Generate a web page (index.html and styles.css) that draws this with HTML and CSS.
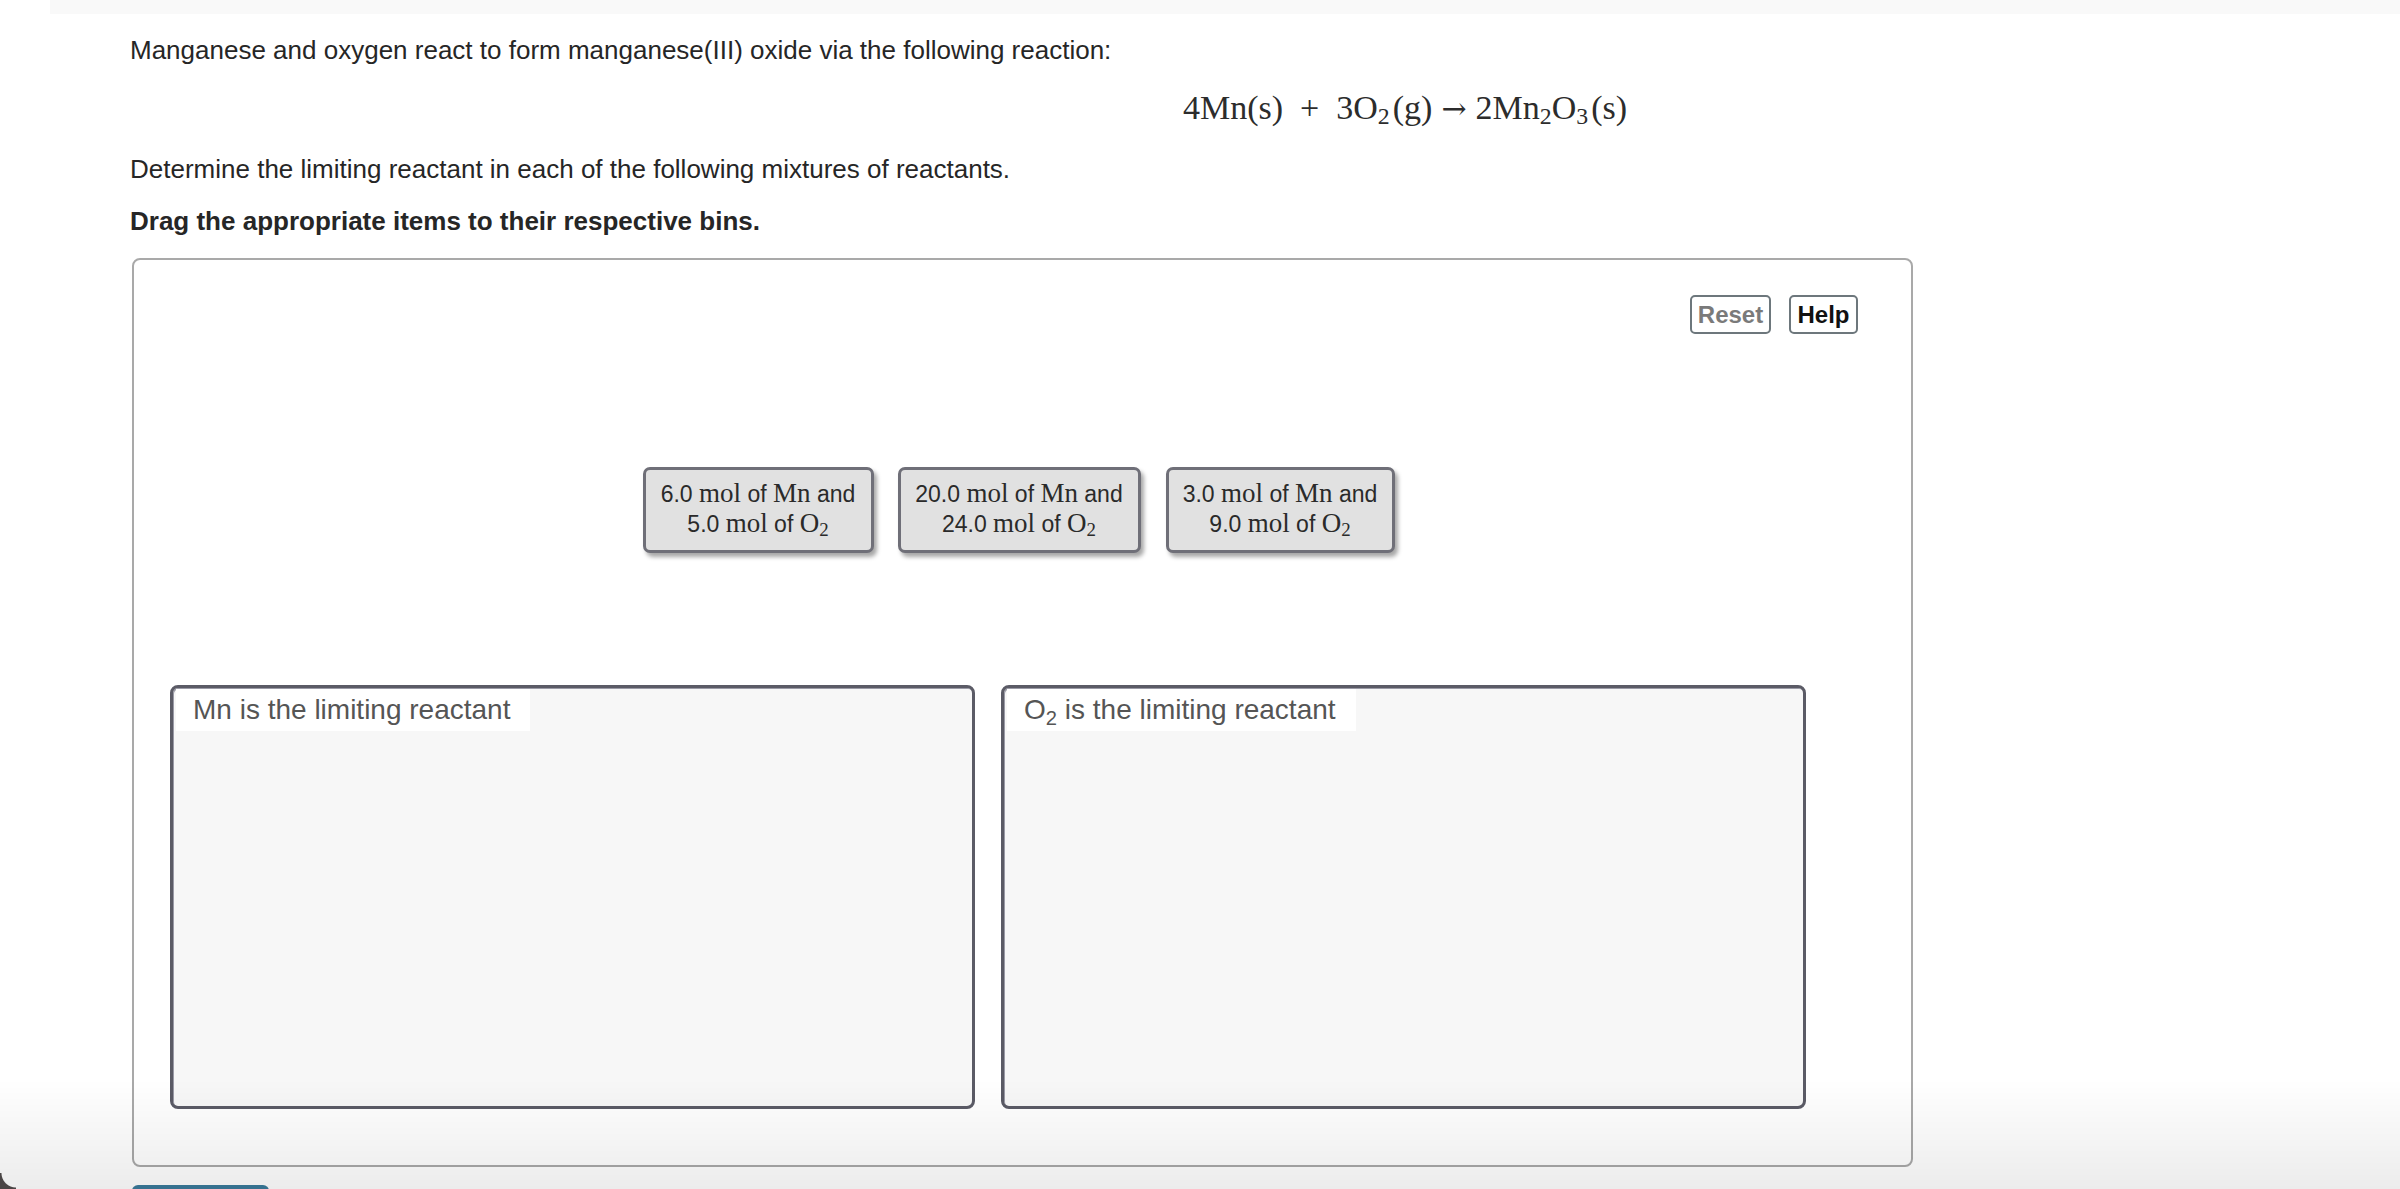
FILE: index.html
```html
<!DOCTYPE html>
<html>
<head>
<meta charset="utf-8">
<link rel="stylesheet" href="styles.css">
</head>
<body>
<div class="topbar"></div>
<main class="content">
  <p class="intro">Manganese and oxygen react to form manganese(III) oxide via the following reaction:</p>
  <div class="equation"><span class="m">4Mn(s)</span><span class="bin-op">+</span><span class="m">3O<sub>2</sub><span class="ph">(g)</span></span><span class="rel">→</span><span class="m">2Mn<sub>2</sub>O<sub>3</sub><span class="ph">(s)</span></span></div>
  <p class="intro second">Determine the limiting reactant in each of the following mixtures of reactants.</p>
  <p class="instr">Drag the appropriate items to their respective bins.</p>

  <section class="dnd">
    <div class="toolbar">
      <button class="tbtn reset">Reset</button>
      <button class="tbtn help">Help</button>
    </div>
    <div class="items">
      <div class="item w1"><span class="num">6.0</span> <span class="ser">mol</span> of <span class="ser">Mn</span> and<br><span class="num">5.0</span> <span class="ser">mol</span> of <span class="ser">O<sub>2</sub></span></div>
      <div class="item w2"><span class="num">20.0</span> <span class="ser">mol</span> of <span class="ser">Mn</span> and<br><span class="num">24.0</span> <span class="ser">mol</span> of <span class="ser">O<sub>2</sub></span></div>
      <div class="item w3"><span class="num">3.0</span> <span class="ser">mol</span> of <span class="ser">Mn</span> and<br><span class="num">9.0</span> <span class="ser">mol</span> of <span class="ser">O<sub>2</sub></span></div>
    </div>
    <div class="bins">
      <div class="dropbin"><div class="label">Mn is the limiting reactant</div></div>
      <div class="dropbin"><div class="label">O<sub>2</sub> is the limiting reactant</div></div>
    </div>
  </section>
  <div class="submit"></div>
</main>
<div class="shade"></div>
<div class="corner"></div>
</body>
</html>
```
FILE: styles.css
```css
html, body {
  margin: 0;
  padding: 0;
  height: 100%;
  overflow: hidden;
  background: #ffffff;
}
body {
  font-family: "Liberation Sans", Arial, Helvetica, sans-serif;
  color: #262626;
}
.topbar {
  margin-left: 50px;
  height: 14px;
  background: #f9f9f9;
}
.content {
  padding-left: 130px;
}
.intro {
  margin: 20px 0 0 0;
  font-size: 26px;
  line-height: 32px;
}
.intro.second {
  margin-top: 23px;
}
.equation {
  margin: 20px 0 0 1053px;
  font-family: "Liberation Serif", "DejaVu Serif", serif;
  font-size: 34px;
  line-height: 44px;
  height: 44px;
  color: #2c2c2c;
  white-space: nowrap;
}
.equation sub, .item .ser sub {
  font-size: 0.7em;
  vertical-align: -0.22em;
  line-height: 0;
}
.equation .ph {
  margin-left: 3px;
}
.equation .bin-op {
  margin: 0 17px;
}
.equation .rel {
  font-family: "DejaVu Serif", serif;
  font-size: 30px;
  margin: 0 9px 0 9px;
}
.instr {
  margin: 20px 0 0 0;
  font-size: 26px;
  line-height: 32px;
  font-weight: bold;
}
.dnd {
  margin: 21px 0 0 2px;
  width: 1777px;
  height: 905px;
  border: 2px solid #a9a9a9;
  border-radius: 8px;
  box-sizing: content-box;
}
.toolbar {
  display: flex;
  justify-content: flex-end;
  gap: 18px;
  padding: 35px 53px 0 0;
}
.tbtn {
  font-family: "Liberation Sans", Arial, sans-serif;
  font-weight: bold;
  font-size: 24px;
  height: 39px;
  padding: 0 4px;
  background: #fff;
  border: 2px solid #6d777c;
  border-radius: 5px;
}
.tbtn.reset { color: #7a7a7a; width: 81px; }
.tbtn.help { color: #111; width: 69px; }
.items {
  display: flex;
  justify-content: center;
  gap: 23px;
  margin-top: 133px;
  padding-right: 8px;
}
.item {
  box-sizing: border-box;
  height: 86px;
  padding: 9px 2px 0 2px;
  background: #e1e1e1;
  border: 3px solid #6f6f78;
  border-radius: 7px;
  box-shadow: 3px 4px 4px rgba(0, 0, 0, 0.35);
  text-align: center;
  font-size: 23px;
  line-height: 29px;
  color: #2a2a2a;
  white-space: nowrap;
}
.item.w1 { width: 231px; }
.item.w2 { width: 243px; margin-left: 1px; }
.item.w3 { width: 229px; margin-left: 2px; }
.item .ser {
  font-family: "Liberation Serif", "DejaVu Serif", serif;
  font-size: 27px;
}
.bins {
  display: flex;
  gap: 26px;
  margin-top: 132px;
  padding-left: 36px;
}
.dropbin {
  box-sizing: border-box;
  width: 805px;
  height: 424px;
  background: #f7f7f7;
  border: 3px solid #5b5b66;
  border-radius: 8px;
  box-shadow: inset 1px 1px 0 #9a9aa6;
}
.label {
  display: inline-block;
  background: #ffffff;
  margin: 1px 0 0 3px;
  padding: 0 20px 0 17px;
  height: 42px;
  line-height: 42px;
  font-size: 28px;
  color: #555;
}
.label sub {
  font-size: 0.72em;
  vertical-align: -0.3em;
  line-height: 0;
}
.submit {
  margin: 18px 0 0 2px;
  width: 137px;
  height: 30px;
  background: #3b7b9b;
  border-radius: 6px 6px 0 0;
}
.shade {
  position: fixed;
  left: 0;
  right: 0;
  bottom: 0;
  height: 110px;
  background: linear-gradient(to bottom, rgba(0,0,0,0), rgba(0,0,0,0.075));
  pointer-events: none;
}
.corner {
  position: fixed;
  left: 0;
  bottom: 0;
  width: 16px;
  height: 16px;
  background: radial-gradient(circle at 100% 0, rgba(0,0,0,0) 14px, #4a4545 15px);
  pointer-events: none;
}
```
